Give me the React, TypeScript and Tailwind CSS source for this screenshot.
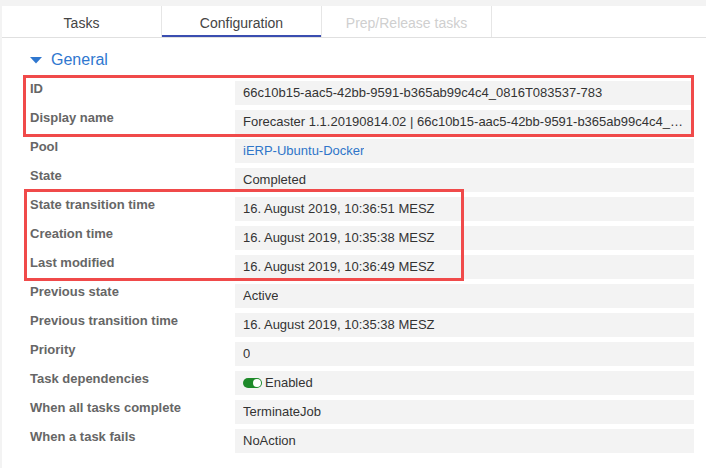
import { type ReactNode } from 'react';

interface Row {
  label: string;
  value: ReactNode;
}

const Toggle = () => (
  <span className="inline-flex items-center gap-[3px]">
    <span className="relative inline-block h-[10px] w-[19px] rounded-full bg-[#1e8a2a]">
      <span className="absolute right-[1px] top-[1px] h-[8px] w-[8px] rounded-full bg-white" />
    </span>
    <span>Enabled</span>
  </span>
);

const rows: Row[] = [
  { label: 'ID', value: '66c10b15-aac5-42bb-9591-b365ab99c4c4_0816T083537-783' },
  { label: 'Display name', value: 'Forecaster 1.1.20190814.02 | 66c10b15-aac5-42bb-9591-b365ab99c4c4_0816T083537-783' },
  { label: 'Pool', value: <span className="text-[#2f75c9]">iERP-Ubuntu-Docker</span> },
  { label: 'State', value: 'Completed' },
  { label: 'State transition time', value: '16. August 2019, 10:36:51 MESZ' },
  { label: 'Creation time', value: '16. August 2019, 10:35:38 MESZ' },
  { label: 'Last modified', value: '16. August 2019, 10:36:49 MESZ' },
  { label: 'Previous state', value: 'Active' },
  { label: 'Previous transition time', value: '16. August 2019, 10:35:38 MESZ' },
  { label: 'Priority', value: '0' },
  { label: 'Task dependencies', value: <Toggle /> },
  { label: 'When all tasks complete', value: 'TerminateJob' },
  { label: 'When a task fails', value: 'NoAction' },
];

const tabs = [
  { name: 'Tasks', state: 'normal' },
  { name: 'Configuration', state: 'active' },
  { name: 'Prep/Release tasks', state: 'disabled' },
];

const App = () => {
  return (
    <div
      className="relative h-[468px] w-[706px] overflow-hidden bg-[#f3f3f3] pt-[6px] pl-[2px]"
      style={{ fontFamily: '"Liberation Sans", Arial, sans-serif' }}
    >
      <div className="h-full bg-white">
        {/* Tabs */}
        <div className="flex h-[32px] border-b border-[#e0e0e0]">
          {tabs.map((t) => (
            <div
              key={t.name}
              className={
                'relative flex w-[160px] items-center justify-center border-r border-[#e6e6e6] pt-[3px] text-[14px] ' +
                (t.state === 'disabled' ? 'w-[170px] text-[#cfcfcf]' : 'text-[#444]')
              }
            >
              {t.name}
              {t.state === 'active' && (
                <span className="absolute bottom-[0px] left-0 right-0 h-[2px] bg-[#3a4db0]" />
              )}
            </div>
          ))}
        </div>

        {/* Section header */}
        <div className="flex items-center gap-[9px] pl-[28px] pt-[10px] text-[16px] text-[#2f77cf]">
          <svg width="12" height="7" viewBox="0 0 12 7">
            <path d="M0 0 H12 L6 6.5 Z" fill="#2f77cf" />
          </svg>
          <span>General</span>
        </div>

        {/* Property rows */}
        <div className="flex flex-col gap-[5px] pl-[28px] pr-[10px] pt-[9px]">
          {rows.map((r) => (
            <div key={r.label} className="flex h-[24px]">
              <div className="w-[205px] shrink-0 text-[13px] leading-[16px] font-bold text-[#666]">{r.label}</div>
              <div className="flex min-w-0 w-[459px] items-center bg-[#f3f3f3] px-[8px] text-[13px] text-[#333]">
                <span className="truncate">{r.value}</span>
              </div>
            </div>
          ))}
        </div>
      </div>

      {/* Annotation boxes */}
      <div className="pointer-events-none absolute left-[23px] top-[75px] h-[62px] w-[671px] border-[3px] border-[#f04a4a]" />
      <div className="pointer-events-none absolute left-[24px] top-[189px] h-[92px] w-[440px] border-[3px] border-[#f04a4a]" />
    </div>
  );
};

export default App;
